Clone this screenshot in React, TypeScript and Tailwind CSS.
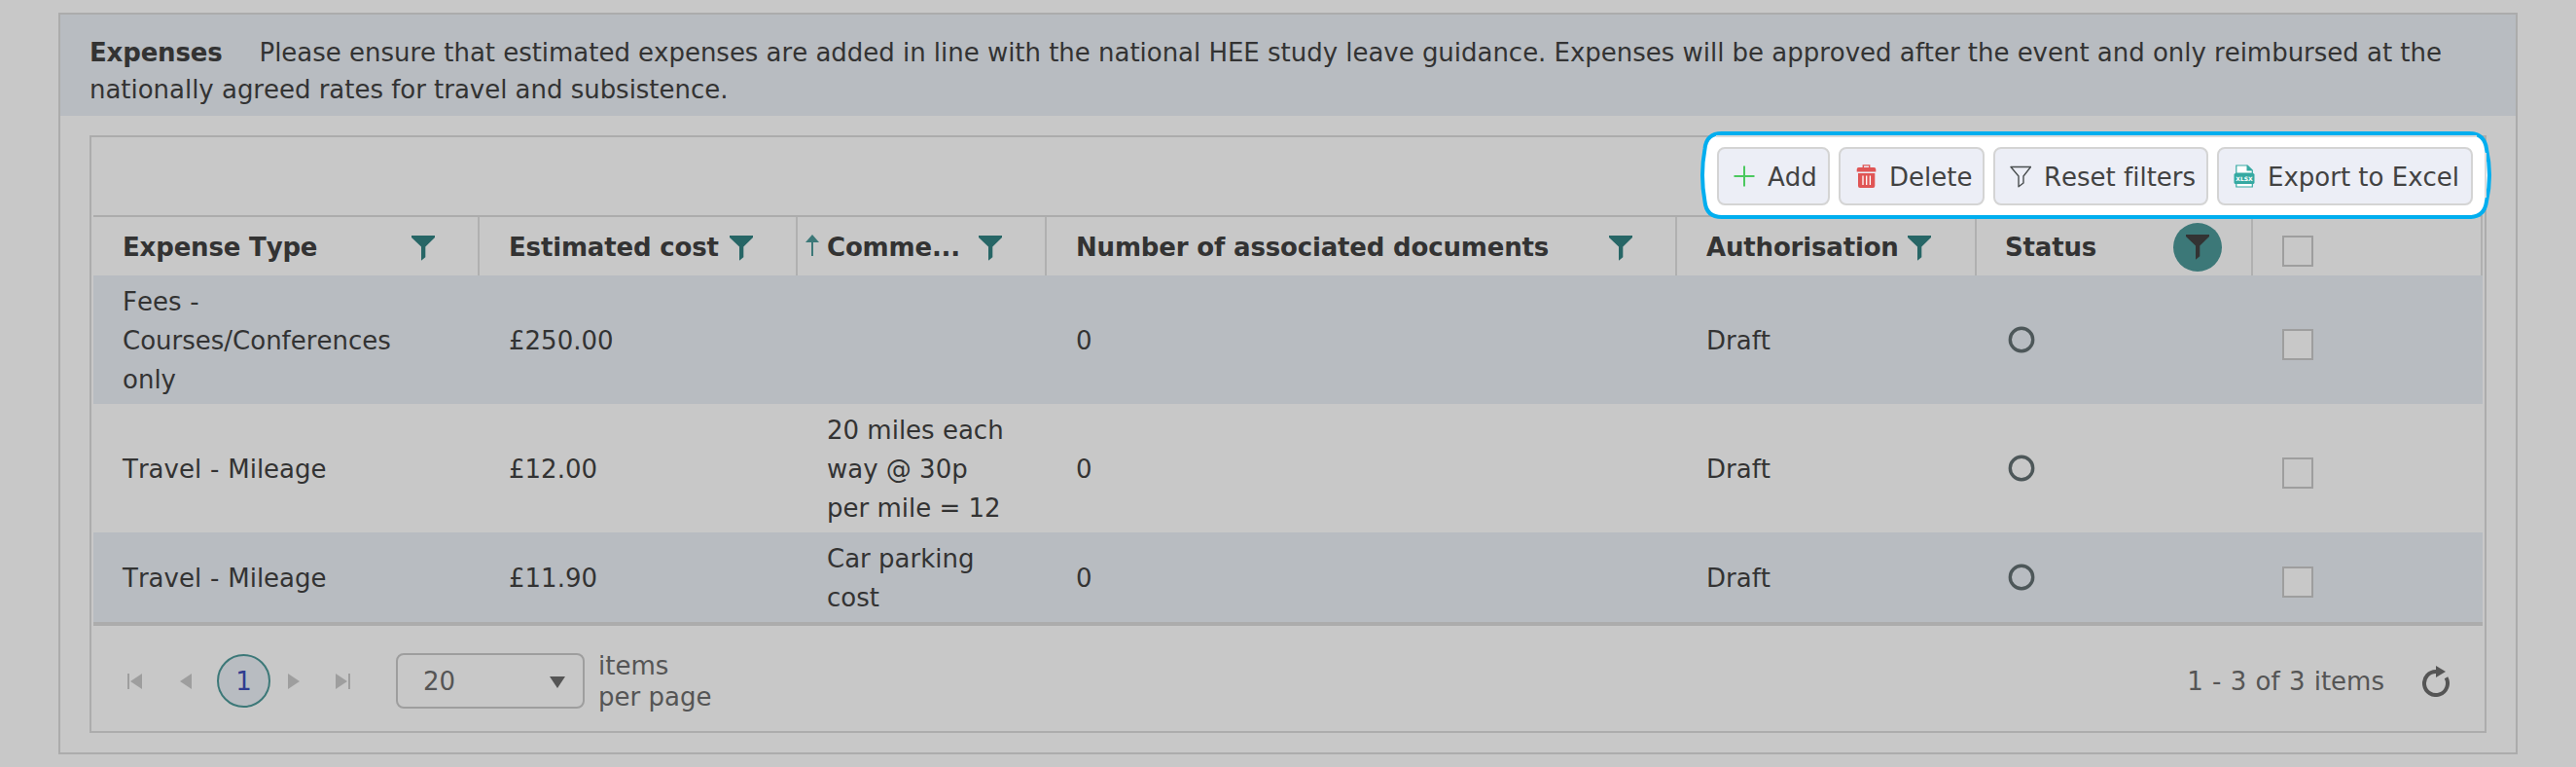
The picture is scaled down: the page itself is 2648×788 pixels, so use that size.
import type { ReactNode } from 'react'

interface Expense {
  id: number
  type: string
  cost: string
  comments: string
  documents: number
  authorisation: string
  height: string
}

const EXPENSES: Expense[] = [
  {
    id: 1,
    type: 'Fees - Courses/Conferences only',
    cost: '£250.00',
    comments: '',
    documents: 0,
    authorisation: 'Draft',
    height: 'h-[132px]',
  },
  {
    id: 2,
    type: 'Travel - Mileage',
    cost: '£12.00',
    comments: '20 miles each way @ 30p per mile = 12',
    documents: 0,
    authorisation: 'Draft',
    height: 'h-[132px]',
  },
  {
    id: 3,
    type: 'Travel - Mileage',
    cost: '£11.90',
    comments: 'Car parking cost',
    documents: 0,
    authorisation: 'Draft',
    height: 'h-[92px]',
  },
]

const GRID_COLUMNS =
  'grid grid-cols-[397px_327px_256px_648px_308px_284px_236px]'

function FunnelIcon() {
  return (
    <svg width="24" height="26" viewBox="0 0 24 26" fill="currentColor" className="shrink-0">
      <path d="M0 0h24v2L14.300 11.500v10.800L10 25.700V11.500L0 2z" />
    </svg>
  )
}

function ToolbarButton({
  icon,
  width,
  children,
}: {
  icon: ReactNode
  width: string
  children: ReactNode
}) {
  return (
    <button
      className={`${width} flex h-[60px] items-center gap-[13px] rounded-lg border-2 border-[#d4d4d4] bg-[#eceef6] pl-[15px] whitespace-nowrap text-[#424242]`}
    >
      {icon}
      <span className="relative top-px">{children}</span>
    </button>
  )
}

function Toolbar() {
  return (
    <div className="absolute -top-[6px] -right-[8px] h-[92px] w-[816px]">
      {/* 강조 테두리 */}
      <svg width="816" height="92" viewBox="0 0 816 92" className="absolute inset-0">
        <path
          d="M24 2H792Q808 2 810 18Q816 45 810 72Q808 88 792 88H24Q8 88 6.500 72Q1.500 45 6.500 18Q8 2 24 2Z"
          fill="#fff"
          stroke="#00aeef"
          strokeWidth="4"
        />
        <path d="M18 5H800" stroke="#dcdcdc" strokeWidth="2" />
        <path d="M809 22V68" stroke="#dcdcdc" strokeWidth="2" />
      </svg>
      <div className="relative flex gap-[9px] pt-[16px] pl-[19px]">
        <ToolbarButton
          width="w-[116px]"
          icon={
            <svg width="22" height="22" viewBox="0 0 22 22" fill="none">
              <path d="M11 0.5v21M0.5 11h21" stroke="#4bc85f" strokeWidth="2" />
            </svg>
          }
        >
          Add
        </ToolbarButton>
        <ToolbarButton
          width="w-[150px]"
          icon={
            <svg width="22" height="24" viewBox="0 0 22 24">
              <path d="M8.300 3V0.900h6.400V3" fill="none" stroke="#e05555" strokeWidth="1.400" />
              <path d="M1.700 7.500V5q0-2 2-2h15.600q2 0 2 2v2.500z" fill="#e05555" />
              <path d="M3 9h17.300v13q0 2-2 2H5q-2 0-2-2z" fill="#e05555" />
              <path d="M8 11.500v9.500M11.700 11.500v9.500M15.400 11.500v9.500" stroke="#fff" strokeWidth="1.300" />
            </svg>
          }
        >
          Delete
        </ToolbarButton>
        <ToolbarButton
          width="w-[221px]"
          icon={
            <svg width="22" height="23" viewBox="0 0 22 23" fill="none">
              <path
                d="M1 1.500h20.500L14 11v7L9 21.800V11z"
                stroke="#4a4f50"
                strokeWidth="1.400"
                strokeLinejoin="round"
              />
            </svg>
          }
        >
          Reset filters
        </ToolbarButton>
        <ToolbarButton
          width="w-[263px]"
          icon={
            <svg width="22" height="24" viewBox="0 0 22 24">
              <path d="M2.800 10V1h11.500l5 5v4M2.800 18v5h16.500v-5" fill="#fff" stroke="#35a9a2" strokeWidth="1.200" />
              <path d="M13.500 0.500v6h6z" fill="#35a9a2" />
              <path d="M2.500 8.500h17l2 1.500v9l-1 1h-19l-1-1v-9z" fill="#35a9a2" />
              <text
                x="11"
                y="17"
                textAnchor="middle"
                fontSize="6"
                fontWeight="700"
                fill="#fff"
              >
                XLSX
              </text>
            </svg>
          }
        >
          Export to Excel
        </ToolbarButton>
      </div>
    </div>
  )
}

function HeaderCell({ title, icon }: { title: string; icon: string }) {
  return (
    <div className="relative flex items-center border-r-2 border-[#b0b0b0] pl-[30px] font-bold tracking-[-0.17px] whitespace-nowrap">
      <span className="relative top-px">{title}</span>
      <span className={`absolute top-[19px] text-[#276666] ${icon}`}>
        <FunnelIcon />
      </span>
    </div>
  )
}

function Checkbox() {
  return (
    <div className="relative top-[5px] size-8 border-2 border-[#9e9e9e] bg-[#c8c8c8]" />
  )
}

function ExpenseRow({ expense, striped }: { expense: Expense; striped: boolean }) {
  return (
    <div
      className={`${GRID_COLUMNS} ${expense.height} items-center leading-[40px] ${striped ? 'bg-[#b8bcc1]' : ''}`}
    >
      <div className="pt-[2px] pr-[74px] pl-[30px] [word-spacing:0.6px]">{expense.type}</div>
      <div className="pt-[2px] pl-[30px]">{expense.cost}</div>
      <div className="pt-[2px] pr-8 pl-[30px]">{expense.comments}</div>
      <div className="pt-[2px] pl-[30px]">{expense.documents}</div>
      <div className="pt-[2px] pl-[30px]">{expense.authorisation}</div>
      <div className="pl-[32px]">
        <svg width="28" height="28" viewBox="0 0 28 28" fill="none">
          <circle cx="14" cy="14" r="11.700" stroke="#4d5759" strokeWidth="3.400" />
        </svg>
      </div>
      <div className="pl-[30px]">
        <Checkbox />
      </div>
    </div>
  )
}

function Pager() {
  return (
    <div className="flex h-[108px] items-center pt-[5px] pr-[34px] pl-[35px] text-[#555]">
      <div className="flex items-center text-[#9e9e9e]">
        <svg width="15" height="16" viewBox="0 0 15 16" fill="currentColor">
          <path d="M0 0h2v16H0zM15 0v16L3 8z" />
        </svg>
        <svg width="12" height="16" viewBox="0 0 12 16" fill="currentColor" className="ml-[39px]">
          <path d="M12 0v16L0 8z" />
        </svg>
        <div className="ml-[26px] flex size-[55px] items-center justify-center rounded-full border-2 border-[#3c7878] bg-[#b8bcc1] text-[#303c90]">
          1
        </div>
        <svg width="12" height="16" viewBox="0 0 12 16" fill="currentColor" className="ml-[18px]">
          <path d="M0 0v16l12-8z" />
        </svg>
        <svg width="15" height="16" viewBox="0 0 15 16" fill="currentColor" className="ml-[37px]">
          <path d="M13 0h2v16h-2zM0 0v16l12-8z" />
        </svg>
      </div>
      <div className="ml-[47px] flex h-[57px] w-[194px] items-center justify-between rounded-lg border-2 border-[#9e9e9e] pr-[18px] pl-[26px]">
        <span>20</span>
        <svg width="16" height="12" viewBox="0 0 16 12" fill="currentColor" className="relative top-px">
          <path d="M0 0h16L8 12z" />
        </svg>
      </div>
      <div className="ml-[14px] w-[120px] leading-[32px]">items per page</div>
      <div className="ml-auto [word-spacing:1px]">1 - 3 of 3 items</div>
      <svg width="28" height="32" viewBox="0 0 28 32" className="ml-[39px]">
        <path d="M24.500 12.200A12 12 0 1 1 14.500 6" fill="none" stroke="currentColor" strokeWidth="4" />
        <path d="M14 0l10 6-10 6z" fill="currentColor" />
      </svg>
    </div>
  )
}

export default function App() {
  return (
    <div className="h-[788px] bg-[#c8c8c8] px-[60px] pt-[13px] font-['DejaVu_Sans',sans-serif] text-[26px] leading-[38px] text-[#333] [font-kerning:none] [font-variant-ligatures:none]">
      <div className="h-[762px] border-2 border-[#acacac]">
        {/* 안내 문구 */}
        <div className="h-[104px] bg-[#b8bcc1] pt-[20px] pl-[30px]">
          <p className="w-[2440px] tracking-[-0.025px]">
            <span className="mr-[38px] font-bold tracking-[-0.17px]">Expenses</span>
            Please ensure that estimated expenses are added in line with the national HEE study
            leave guidance. Expenses will be approved after the event and only reimbursed at the
            nationally agreed rates for travel and subsistence.
          </p>
        </div>

        {/* 비용 목록 */}
        <div className="relative mx-[30px] mt-5 h-[614px] border-2 border-[#acacac] px-[2px]">
          <div className="h-[82px] border-b-2 border-[#acacac]" />
          <div className={`${GRID_COLUMNS} h-[60px]`}>
            <HeaderCell title="Expense Type" icon="left-[327px]" />
            <HeaderCell title="Estimated cost" icon="left-[257px]" />
            <div className="relative grid">
              <svg width="14" height="22" viewBox="0 0 14 22" className="absolute top-[18px] left-[8px]">
                <path d="M7 0l7 8H8v14H6V8H0z" fill="#3c7878" />
              </svg>
              <HeaderCell title="Comme..." icon="left-[186px]" />
            </div>
            <HeaderCell title="Number of associated documents" icon="left-[578px]" />
            <HeaderCell title="Authorisation" icon="left-[237px]" />
            <div className="relative flex items-center border-r-2 border-[#b0b0b0] pl-[29px] font-bold tracking-[-0.17px]">
              <span className="relative top-px">Status</span>
              <span className="absolute top-[6px] left-[202px] flex size-[50px] items-center justify-center rounded-full bg-[#3c7878]">
                <FunnelIcon />
              </span>
            </div>
            <div className="flex items-center border-r-2 border-[#b0b0b0] pl-[30px]">
              <Checkbox />
            </div>
          </div>
          {EXPENSES.map((expense, index) => (
            <ExpenseRow key={expense.id} expense={expense} striped={index % 2 === 0} />
          ))}
          <div className="h-1 bg-[#acacac]" />
          <Pager />
          <Toolbar />
        </div>
      </div>
    </div>
  )
}
